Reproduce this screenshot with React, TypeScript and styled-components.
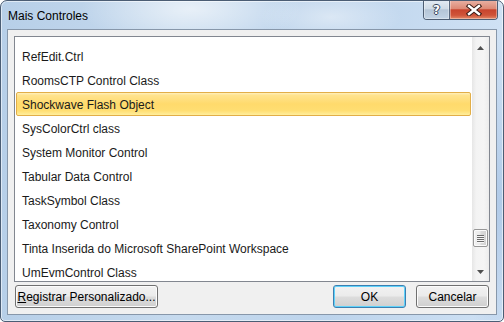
import React from "react";
import styled, { createGlobalStyle } from "styled-components";

const items = [
  "RefEdit.Ctrl",
  "RoomsCTP Control Class",
  "Shockwave Flash Object",
  "SysColorCtrl class",
  "System Monitor Control",
  "Tabular Data Control",
  "TaskSymbol Class",
  "Taxonomy Control",
  "Tinta Inserida do Microsoft SharePoint Workspace",
  "UmEvmControl Class",
];

const selectedIndex = 2;
const thumbOffset = 175;

const GlobalStyle = createGlobalStyle`
  html, body {
    margin: 0;
    padding: 0;
    background: #ffffff;
  }
  * {
    box-sizing: border-box;
  }
`;

const Window = styled.div`
  width: 504px;
  height: 322px;
  display: flex;
  flex-direction: column;
  border: 1px solid #4b5d74;
  border-radius: 7px 7px 5px 5px;
  font-family: "Liberation Sans", Arial, sans-serif;
  font-size: 12px;
  color: #000;
  overflow: hidden;
  box-shadow: inset 0 0 0 1px rgba(255, 255, 255, 0.55);
  background:
    radial-gradient(ellipse 110px 38px at 190px 8px, rgba(255, 255, 255, 0.6), transparent),
    radial-gradient(ellipse 70px 28px at 330px 16px, rgba(255, 255, 255, 0.45), transparent),
    radial-gradient(ellipse 40px 160px at 500px 200px, rgba(120, 160, 210, 0.35), transparent),
    linear-gradient(to right, #b7cfe8, #c6daee 35%, #bdd4ec 65%, #cfe1f4);
`;

const TitleBar = styled.div`
  height: 28px;
  display: flex;
  align-items: flex-start;
  padding: 0 5px 0 7px;
`;

const Title = styled.div`
  flex: 1;
  line-height: 28px;
  padding-top: 1px;
  font-size: 12px;
`;

const CaptionGroup = styled.div`
  display: flex;
  margin-top: -1px;
  height: 20px;
  border: 1px solid #4d5d72;
  border-top: none;
  border-radius: 0 0 4px 4px;
  overflow: hidden;
`;

const CaptionButton = styled.div<{ $close?: boolean }>`
  width: ${(p) => (p.$close ? 47 : 26)}px;
  display: flex;
  align-items: center;
  justify-content: center;
  border-right: ${(p) => (p.$close ? "none" : "1px solid #5a6a80")};
  box-shadow: inset 0 0 0 1px rgba(255, 255, 255, 0.35);
  background: ${(p) =>
    p.$close
      ? "linear-gradient(#e9b3a6, #dd8a76 45%, #c8442d 52%, #cf5439 80%, #e48a68)"
      : "linear-gradient(#e3ebf4, #cfdbe7 45%, #b4c5d7 52%, #c3d4e5 100%)"};
`;

const HelpGlyph = styled.span`
  font-family: "DejaVu Sans", sans-serif;
  font-weight: bold;
  font-size: 12px;
  color: #ffffff;
  line-height: 1;
  text-shadow:
    1px 0 0 #33445a,
    -1px 0 0 #33445a,
    0 1px 0 #33445a,
    0 -1px 0 #33445a;
`;

const Client = styled.div`
  flex: 1;
  margin: 0 6px 6px;
  border: 1px solid #8797aa;
  background: #f0f0f0;
  padding: 6px;
  display: flex;
  flex-direction: column;
`;

const ListBox = styled.div`
  height: 246px;
  border: 1px solid #828790;
  background: #ffffff;
  display: flex;
  overflow: hidden;
`;

const ListItems = styled.div`
  flex: 1;
  padding-top: 7px;
  overflow: hidden;
`;

const Item = styled.div<{ $selected?: boolean }>`
  height: 24px;
  margin: 0 1px;
  padding: 3px 0 0 5px;
  line-height: 19px;
  white-space: nowrap;
  color: #1a1a1a;
  border: 1px solid ${(p) => (p.$selected ? "#e2ae48" : "transparent")};
  border-radius: 2px;
  background: ${(p) =>
    p.$selected
      ? "linear-gradient(#fff0bd 0%, #ffe38e 10%, #ffda6c 50%, #ffde72 80%, #ffee9c 100%)"
      : "transparent"};
`;

const ScrollBar = styled.div`
  width: 17px;
  display: flex;
  flex-direction: column;
  background: linear-gradient(to right, #e6e6e6, #f3f3f3 25%, #f5f5f5 70%, #ececec);
`;

const ArrowButton = styled.div<{ $down?: boolean }>`
  height: 17px;
  display: flex;
  justify-content: center;
  align-items: ${(p) => (p.$down ? "flex-start" : "flex-end")};
  padding: ${(p) => (p.$down ? "6px 0 0" : "0 0 4px")};
`;

const Track = styled.div`
  flex: 1;
  display: flex;
  flex-direction: column;
  align-items: center;
`;

const Thumb = styled.div`
  width: 15px;
  height: 18px;
  border: 1px solid #979797;
  border-radius: 2px;
  box-shadow: inset 0 0 0 1px #fbfbfb;
  background: linear-gradient(to right, #f2f2f2, #ebebeb 45%, #dadada 55%, #d2d2d2);
  display: flex;
  flex-direction: column;
  align-items: center;
  justify-content: center;
  gap: 1px;
`;

const Grip = styled.div`
  width: 7px;
  height: 1px;
  background: #6b6b6b;
  box-shadow: 0 1px 0 #f6f6f6;
`;

const Footer = styled.div`
  margin-top: 3px;
  height: 23px;
  display: flex;
  gap: 10px;
`;

const Button = styled.button<{ $width: number; $default?: boolean }>`
  width: ${(p) => p.$width}px;
  height: 23px;
  padding: 0;
  font-family: "Liberation Sans", Arial, sans-serif;
  font-size: 12px;
  color: #000;
  border: 1px solid ${(p) => (p.$default ? "#3c7fb1" : "#707070")};
  border-radius: 3px;
  box-shadow: inset 0 0 0 1px ${(p) => (p.$default ? "#5fd2fa" : "#fcfcfc")};
  background: linear-gradient(#f2f2f2 0%, #ebebeb 48%, #dddddd 52%, #cfcfcf 100%);
`;

const LeftButton = styled(Button)`
  margin-left: 1px;
  margin-right: auto;
`;

const RightButton = styled(Button)<{ $last?: boolean }>`
  margin-right: ${(p) => (p.$last ? 1 : 0)}px;
`;

const AccessKey = styled.span`
  text-decoration: underline;
`;

function Arrow({ down }: { down?: boolean }) {
  return (
    <svg width="7" height="4" viewBox="0 0 7 4">
      <polygon
        points={down ? "0,0 7,0 3.5,4" : "3.5,0 7,4 0,4"}
        fill="#505050"
      />
    </svg>
  );
}

function CloseGlyph() {
  return (
    <svg width="16" height="12" viewBox="0 0 16 12">
      <path d="M3 2 L13 10 M13 2 L3 10" stroke="#3a1c16" strokeWidth="4.4" strokeLinecap="square" />
      <path d="M3 2 L13 10 M13 2 L3 10" stroke="#ffffff" strokeWidth="2.4" strokeLinecap="square" />
    </svg>
  );
}

export default function App() {
  return (
    <>
      <GlobalStyle />
      <Window>
        <TitleBar>
          <Title>Mais Controles</Title>
          <CaptionGroup>
            <CaptionButton>
              <HelpGlyph>?</HelpGlyph>
            </CaptionButton>
            <CaptionButton $close>
              <CloseGlyph />
            </CaptionButton>
          </CaptionGroup>
        </TitleBar>
        <Client>
          <ListBox>
            <ListItems>
              {items.map((name, i) => (
                <Item key={name} $selected={i === selectedIndex}>
                  {name}
                </Item>
              ))}
            </ListItems>
            <ScrollBar>
              <ArrowButton>
                <Arrow />
              </ArrowButton>
              <Track>
                <Thumb style={{ marginTop: thumbOffset }}>
                  <Grip />
                  <Grip />
                  <Grip />
                  <Grip />
                </Thumb>
              </Track>
              <ArrowButton $down>
                <Arrow down />
              </ArrowButton>
            </ScrollBar>
          </ListBox>
          <Footer>
            <LeftButton $width={143}>
              <AccessKey>R</AccessKey>egistrar Personalizado...
            </LeftButton>
            <RightButton $width={73} $default>
              OK
            </RightButton>
            <RightButton $width={73} $last>
              Cancelar
            </RightButton>
          </Footer>
        </Client>
      </Window>
    </>
  );
}
